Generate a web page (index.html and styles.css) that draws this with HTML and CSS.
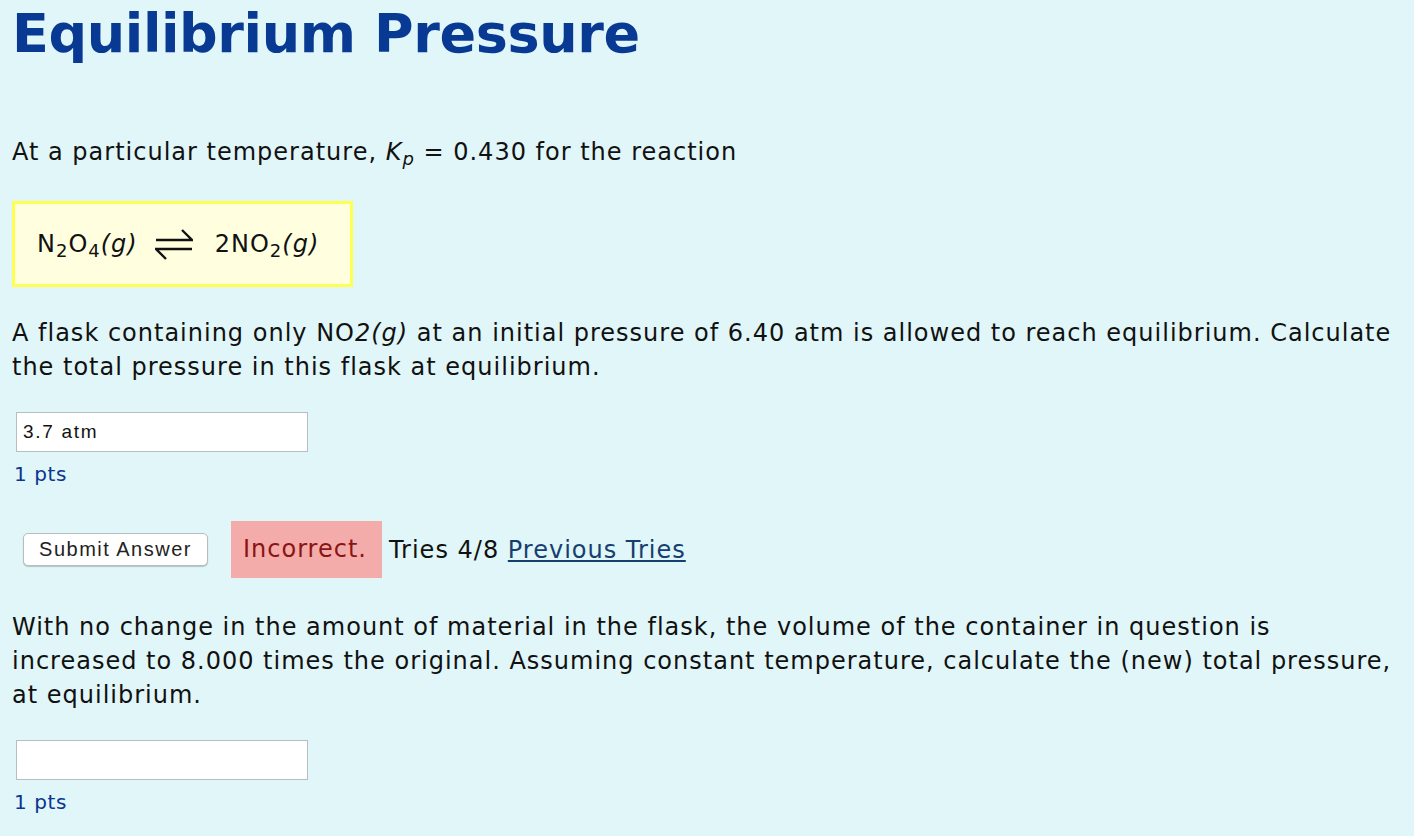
FILE: index.html
```html
<!DOCTYPE html>
<html lang="en">
<head>
    <meta charset="UTF-8">
    <title>Equilibrium Pressure</title>
    <link rel="stylesheet" href="styles.css">
</head>
<body>
    <h1 class="title">Equilibrium Pressure</h1>

    <p class="intro">At a particular temperature, <i>K<sub>p</sub></i> = 0.430 for the reaction</p>

    <div class="reaction">
        <span>N<sub>2</sub>O<sub>4</sub><i>(g)</i></span>
        <svg class="arrows" width="38" height="32" viewBox="0 0 38 32">
            <path d="M1 12 H37 L27 2" fill="none" stroke="#111" stroke-width="2.4"/>
            <path d="M37 21 H1 L11 31" fill="none" stroke="#111" stroke-width="2.4"/>
        </svg>
        <span>2NO<sub>2</sub><i>(g)</i></span>
    </div>

    <p class="question">A flask containing only NO<i>2(g)</i> at an initial pressure of 6.40 atm is allowed to reach equilibrium. Calculate the total pressure in this flask at equilibrium.</p>

    <div class="answer">
        <input type="text" class="answer-box" value="3.7 atm">
        <div class="pts">1 pts</div>
    </div>

    <div class="submit-row">
        <button class="submit-btn">Submit Answer</button>
        <span class="incorrect">Incorrect.</span>
        <span class="tries">Tries 4/8 <a href="#">Previous Tries</a></span>
    </div>

    <p class="question question-next">With no change in the amount of material in the flask, the volume of the container in question is increased to 8.000 times the original. Assuming constant temperature, calculate the (new) total pressure, at equilibrium.</p>

    <div class="answer">
        <input type="text" class="answer-box" value="">
        <div class="pts">1 pts</div>
    </div>
</body>
</html>
```

FILE: styles.css
```css
body {
    margin: 0;
    padding: 0 14px 0 12px;
    background-color: #e0f6f8;
    color: #111;
    font-family: "DejaVu Sans", Verdana, sans-serif;
    font-size: 24px;
    line-height: 34px;
    letter-spacing: 1px;
}
.title {
    margin: 0;
    padding-top: 2px;
    font-size: 54px;
    line-height: 64px;
    color: #083a94;
    letter-spacing: -0.4px;
}
.intro {
    margin: 69px 0 0;
}
sub {
    font-size: 0.75em;
    line-height: 0;
    vertical-align: -0.3em;
}
.reaction {
    display: flex;
    align-items: center;
    box-sizing: border-box;
    width: 341px;
    height: 86px;
    margin-top: 32px;
    padding: 0 22px 0 22px;
    background-color: #ffffe0;
    border: 3px solid #ffff50;
}
.arrows {
    margin: 0 22px 0 17px;
}
.question {
    margin: 29px 0 0;
}
.question-next {
    margin-top: 32px;
}
.answer {
    margin-top: 28px;
    padding-left: 4px;
}
.answer-box {
    display: block;
    box-sizing: border-box;
    width: 292px;
    height: 40px;
    margin: 0;
    padding: 0 6px;
    border: 1px solid #b5bfc2;
    background: #fff;
    font-family: "Liberation Sans", Arial, sans-serif;
    font-size: 19px;
    letter-spacing: 1.7px;
    color: #111;
}
.pts {
    margin-top: 6px;
    margin-left: -2px;
    color: #0b3590;
    font-size: 20px;
    line-height: 32px;
    letter-spacing: 0.6px;
}
.submit-row {
    display: flex;
    align-items: center;
    margin-top: 31px;
    padding-left: 11px;
}
.submit-btn {
    box-sizing: border-box;
    width: 185px;
    height: 33px;
    padding: 0;
    background: #fff;
    border: 1px solid #b7bcbc;
    border-radius: 5px;
    box-shadow: 0 1px 1px rgba(0, 0, 0, 0.2);
    font-family: "Liberation Sans", Arial, sans-serif;
    font-size: 20px;
    letter-spacing: 1.5px;
    color: #222;
}
.incorrect {
    margin-left: 23px;
    padding: 11px 15px 12px 12px;
    background-color: #f4acaa;
    color: #8a1414;
    line-height: 34px;
}
.tries {
    margin-left: 7px;
}
.tries a {
    color: #173e70;
}
```
